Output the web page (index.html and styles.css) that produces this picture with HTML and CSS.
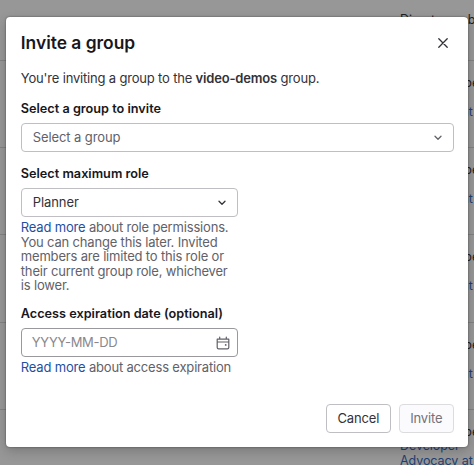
FILE: index.html
```html
<!DOCTYPE html>
<html lang="en">
<head>
<meta charset="utf-8">
<title>Invite a group</title>
<link rel="stylesheet" href="styles.css">
</head>
<body>
<div class="members">
  <div class="member first"><p>Direct member</p></div>
  <div class="member"><p class="title">Developer pe</p><a>Developer</a><a>Advocacy at</a></div>
  <div class="member"><p class="title">Developer pe</p><a>Developer</a><a>Advocacy at</a></div>
  <div class="member"><p class="title">Developer pe</p><a>Developer</a><a>Advocacy at</a></div>
  <div class="member"><p class="title">Developer pe</p><a>Developer</a><a>Advocacy at</a></div>
  <div class="member"><p class="title">Developer pe</p><a>Developer</a><a>Advocacy at</a></div>
</div>
<div class="backdrop">
  <section class="modal" role="dialog">
    <header class="head">
      <h1>Invite a group</h1>
      <svg class="close" viewBox="0 0 10 10"><path d="M.8.8l8.4 8.4M9.2.8L.8 9.2"/></svg>
    </header>
    <p class="intro">You're inviting a group to the <strong>video-demos</strong> group.</p>
    <h2 class="label">Select a group to invite</h2>
    <div class="field wide"><span class="muted">Select a group</span>
      <svg class="chevron soft" viewBox="0 0 8 6"><path d="M1 1.2l3 3 3-3"/></svg></div>
    <h2 class="label">Select maximum role</h2>
    <div class="field"><span>Planner</span>
      <svg class="chevron" viewBox="0 0 8 6"><path d="M1 1.2l3 3 3-3"/></svg></div>
    <p class="help"><a>Read more</a> about role permissions.<br>You can change this later. Invited<br>members are limited to this role or<br>their current group role, whichever<br>is lower.</p>
    <h2 class="label date">Access expiration date (optional)</h2>
    <div class="field input"><span class="placeholder">YYYY-MM-DD</span>
      <svg class="calendar" viewBox="0 0 14 14"><path d="M1.2 3.2h11.6v8.2q0 1.4-1.4 1.4H2.6q-1.4 0-1.4-1.4zM1.2 6h11.6M3.7 1v2M10.3 1v2"/><circle cx="9.7" cy="8.9" r=".9"/></svg></div>
    <p class="help"><a>Read more</a> about access expiration</p>
    <footer class="actions">
      <button class="cancel">Cancel</button>
      <button class="invite" disabled>Invite</button>
    </footer>
  </section>
</div>
</body>
</html>
```
FILE: styles.css
```css
* { box-sizing: border-box; }
body { margin: 0; width: 474px; height: 465px; overflow: hidden; background: #979797; font-family: Inter, "Liberation Sans", sans-serif; font-size: 13px; color: #333238; }
h1, h2, p { margin: 0; }
.members { height: 465px; overflow: hidden; }
.member { height: 87.2px; padding: 15px 0 0 400px; border-bottom: 1px solid #828282; line-height: 14.5px; font-size: 12.5px; white-space: nowrap; color: #202024; }
.first { height: 61px; padding-top: 13px; }
.title { letter-spacing: .05px; }
.member a { display: block; color: #213f73; letter-spacing: -.07px; }
.backdrop { position: absolute; inset: 0; padding: 17.4px 6px 0 6.3px; }
.modal { width: 462px; height: 430px; padding: 0 14.5px; background: #fff; border-radius: 4px; box-shadow: 0 0 2px rgba(0,0,0,.5), 0 4px 12px rgba(0,0,0,.2); }
.head { height: 52px; display: flex; align-items: center; justify-content: space-between; }
h1 { font-size: 17.4px; line-height: 24px; font-weight: 600; color: #18171d; }
.close { width: 10px; height: 10px; margin-right: 6px; }
svg { fill: none; stroke: #333238; stroke-width: 1.3; stroke-linecap: round; stroke-linejoin: round; }
.intro { line-height: 18px; letter-spacing: -.18px; }
.intro strong { font-weight: 600; }
.label { margin-top: 14px; font-size: 12.7px; line-height: 16px; font-weight: 600; color: #18171d; }
.field { width: 217px; height: 29px; margin-top: 6px; padding: 0 11px; display: flex; align-items: center; justify-content: space-between; letter-spacing: -.1px; border: 1px solid #bfbfc3; border-radius: 4px; }
.field span { margin-bottom: 1px; }
.wide { width: 433px; }
.muted { color: #626168; }
.chevron { width: 8px; height: 6px; }
.soft { stroke: #626168; }
.help { margin-top: 3px; letter-spacing: -.18px; line-height: 14.4px; color: #626168; white-space: nowrap; }
.help a { color: #1f4f9f; }
.date { margin-top: 14px; }
.input { border-color: #99989d; padding: 0 7px 0 10px; letter-spacing: -.28px; }
.placeholder { color: #89888d; }
.calendar { width: 14px; height: 14px; stroke: #626168; stroke-width: 1.2; }
.calendar circle { fill: #626168; stroke: none; }
.actions { display: flex; justify-content: flex-end; gap: 8px; margin-top: 29px; }
button { height: 29px; padding: 0 0 1px; font: 13px Inter, sans-serif; letter-spacing: -.15px; border: 1px solid #bfbfc3; border-radius: 4px; background: #fff; color: #333238; }
.cancel { width: 65px; }
.invite { width: 55px; background: #fbfafd; border-color: #dcdcde; color: #737278; }
```
